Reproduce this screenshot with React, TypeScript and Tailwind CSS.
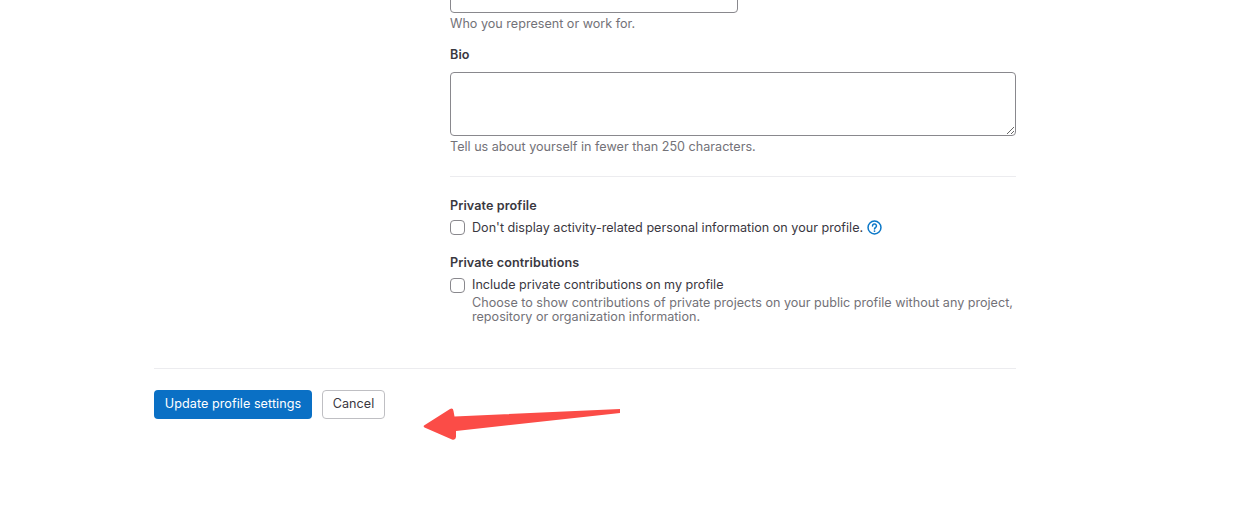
import React from "react";

const RedArrow = () => (
  <svg className="absolute left-[415px] top-[400px]" width="215" height="50" viewBox="415 400 215 50" fill="none">
    <path
      d="M424 425.5 L450 409 Q453 407.5 453.5 411 L454.5 416.5 L620 409 L620 413 L456 431 L456 437 Q455.5 440.5 452 439.5 L424.5 427.5 Q423 426.5 424 425.5 Z"
      fill="#fb4c47"
    />
  </svg>
);

const HelpIcon = () => (
  <svg width="15" height="15" viewBox="0 0 16 16" fill="none" className="ml-[4px] -mt-[2px] shrink-0">
    <circle cx="8" cy="8" r="6.9" stroke="#0b78c8" strokeWidth="1.6" />
    <path d="M5.9 6.3a2.1 2.1 0 1 1 3.3 1.7c-.8.5-1.2.9-1.2 1.6" stroke="#0b78c8" strokeWidth="1.6" strokeLinecap="round" />
    <circle cx="8" cy="11.8" r=".95" fill="#0b78c8" />
  </svg>
);

const Checkbox = ({ className }: { className?: string }) => (
  <input
    type="checkbox"
    className={`appearance-none shrink-0 w-[15px] h-[15px] bg-white border border-[#89888d] rounded-[4px] ${className ?? ""}`}
  />
);

export default function App() {
  return (
    <div className="relative h-[509px] overflow-hidden bg-white text-[12.6px] font-['Inter',sans-serif] text-[#3a383f]">
      <div className="ml-[154px] w-[862px]">
        <div className="ml-[296px]">
          <div className="-mt-[20px] h-[33px] w-[288px] border border-[#89888d] rounded-[4px] bg-white" />
          <p className="mt-[2px] leading-[18px] text-[#737278]">Who you represent or work for.</p>

          <label className="block mt-[13px] leading-[18px] font-semibold tracking-[0.1px]">Bio</label>
          <textarea className="block mt-[8px] w-[566px] h-[64px] border border-[#89888d] rounded-[4px] bg-white" />
          <p className="mt-[2px] leading-[18px] text-[#737278]">Tell us about yourself in fewer than 250 characters.</p>

          <div className="mt-[20px] border-t border-[#ececef]" />

          <h4 className="mt-[20px] leading-[18px] font-semibold tracking-[0.1px]">Private profile</h4>
          <div className="flex items-center mt-[4px] h-[18px]">
            <Checkbox className="-mt-[2px]" />
            <span className="ml-[7px] leading-[18px] tracking-[0.01px]">Don't display activity-related personal information on your profile.</span>
            <HelpIcon />
          </div>

          <h4 className="mt-[17px] leading-[18px] font-semibold tracking-[0.1px]">Private contributions</h4>
          <div className="flex items-center mt-[4px] h-[18px]">
            <Checkbox />
            <span className="ml-[7px] leading-[18px]">Include private contributions on my profile</span>
          </div>
          <p className="ml-[22px] mt-[2px] leading-[14px] text-[#737278]">
            Choose to show contributions of private projects on your public profile without any project, repository or organization information.
          </p>
        </div>

        <div className="mt-[44px] border-t border-[#ececef]" />
        <div className="flex gap-[10px] mt-[21px] tracking-[0.06px]">
          <button className="w-[158px] h-[29px] rounded-[4px] bg-[#0a70c5] text-white">Update profile settings</button>
          <button className="w-[63px] h-[29px] rounded-[4px] bg-white border border-[#bfbfc3]">Cancel</button>
        </div>
      </div>
      <RedArrow />
    </div>
  );
}
